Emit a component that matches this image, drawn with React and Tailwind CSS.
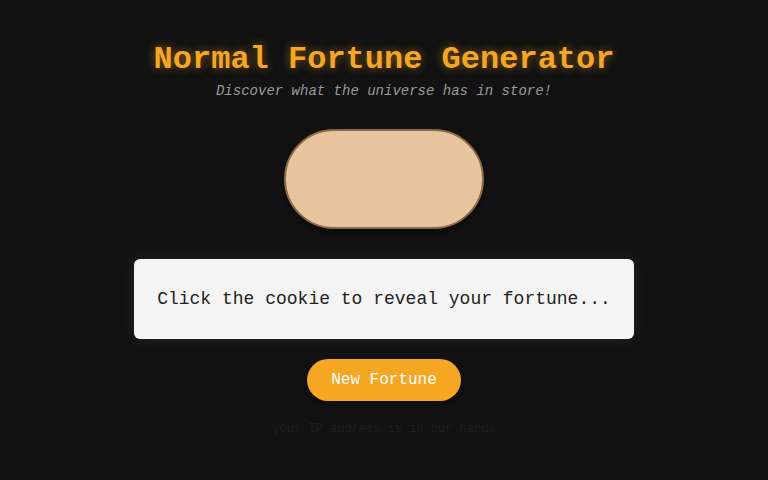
import { useState } from 'react'

const fortunes = [
  'A pleasant surprise is waiting for you.',
  'Your hard work will soon pay off.',
  'Good news will come to you by mail.',
  'You will find what you are looking for.',
]

export default function App() {
  const [fortune, setFortune] = useState('Click the cookie to reveal your fortune...')

  const reveal = () => {
    setFortune(fortunes[Math.floor(Math.random() * fortunes.length)])
  }

  return (
    <div className="min-h-screen bg-[#121212] flex flex-col items-center pt-[41px] font-['Liberation_Mono',monospace]">
      <h1 className="text-[32px] leading-[38px] font-bold text-[#f5a623] [text-shadow:0_0_10px_rgba(245,166,35,0.5)]">
        Normal Fortune Generator
      </h1>
      <p className="mt-[2px] text-sm leading-5 italic text-[#999999]">
        Discover what the universe has in store!
      </p>

      {/* cookie */}
      <button
        onClick={reveal}
        className="mt-[28px] w-[200px] h-[100px] rounded-full bg-[#e8c49f] border-2 border-[#8b6a48] shadow-[0_4px_10px_rgba(0,0,0,0.4)] cursor-pointer"
      />

      <div className="mt-[30px] w-[500px] h-20 rounded-md bg-[#f4f4f4] flex items-center justify-center shadow-[0_0_15px_rgba(255,255,255,0.08)]">
        <p className="text-lg text-[#222222]">{fortune}</p>
      </div>

      <button
        onClick={reveal}
        className="mt-5 h-[42px] px-6 rounded-full bg-[#f5a623] text-white text-base shadow-[0_4px_10px_rgba(0,0,0,0.3)]"
      >
        New Fortune
      </button>

      <p className="mt-5 text-xs leading-4 text-[#1e1e1e]">your IP address is in our hands</p>
    </div>
  )
}
